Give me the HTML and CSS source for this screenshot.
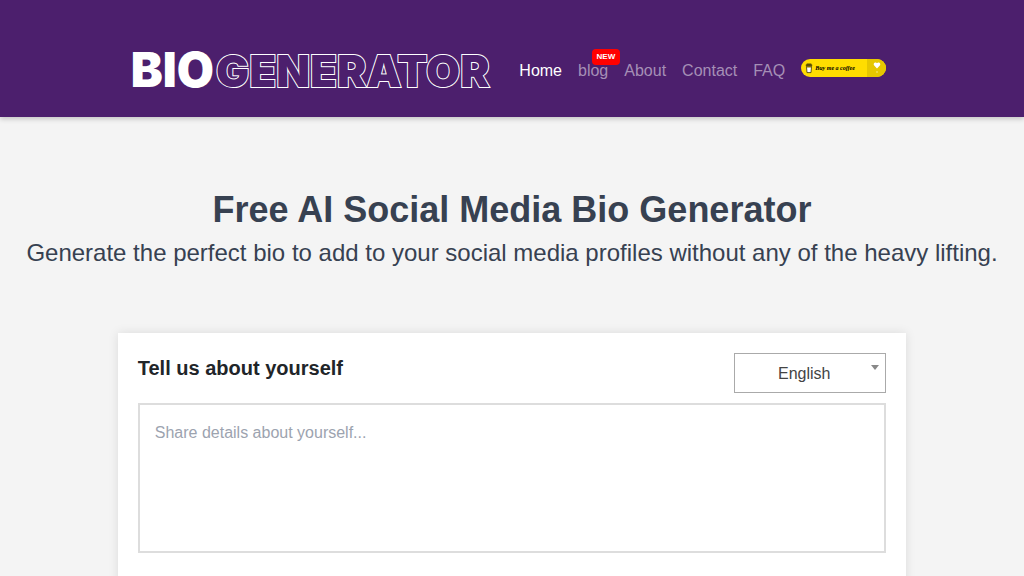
FILE: index.html
```
<!DOCTYPE html>
<html lang="en">

<head>
	<title>Free AI Social Media Bio Generator</title>
	<meta charset="utf-8" />
	<meta name="viewport" content="width=device-width, initial-scale=1">
	<link rel="stylesheet" href="styles.css">
</head>

<body>
	<header class="header">
		<nav class="navbar">
			<a class="logo" href="/"><span class="logo-solid">BIO</span><span class="logo-outline">GENERATOR</span></a>
			<ul class="menu">
				<li><a class="active" href="/">Home</a></li>
				<li><a class="has-badge" href="/blog">blog<span class="badge">NEW</span></a></li>
				<li><a href="/about">About</a></li>
				<li><a href="/contact">Contact</a></li>
				<li><a href="/faq">FAQ</a></li>
			</ul>
			<a class="coffee" href="/coffee">
				<svg class="cup" viewBox="0 0 8 12" width="8" height="12">
					<path d="M1.4 3.5h5.2L6 10.6H2z" fill="#fff" stroke="#3c3500" stroke-width=".8" />
					<path d="M1.8 1.4h4.4l.5 1.4H1.3zM.8 2.6h6.4v1.2H.8z" fill="#5a4e00" />
					<path d="M1.5 4h5l-.3 1.4H1.8z" fill="#8a7500" />
				</svg>
				<span class="coffee-text">Buy me a coffee</span>
				<span class="coffee-end">
					<svg viewBox="0 0 10 14" width="10" height="14">
						<path d="M5 7.4L2.2 4.6C.8 3 2.6.6 4.4 1.8L5 2.3l.6-.5C7.4.6 9.2 3 7.8 4.6z" fill="#fff" />
						<circle cx="5" cy="11" r=".7" fill="#fff6b0" />
					</svg>
				</span>
			</a>
		</nav>
	</header>

	<main>
		<div class="intro">
			<h1>Free AI Social Media Bio Generator</h1>
			<p>Generate the perfect bio to add to your social media profiles without any of the heavy lifting.</p>
		</div>

		<form class="card">
			<div class="card-top">
				<label class="card-title" for="about">Tell us about yourself</label>
				<div class="select">
					<select id="language" name="language" aria-label="Language">
						<option>English</option>
						<option>Spanish</option>
						<option>French</option>
						<option>German</option>
					</select>
				</div>
			</div>
			<textarea id="about" name="about" placeholder="Share details about yourself..."></textarea>
		</form>
	</main>
</body>

</html>
```
FILE: styles.css
```
* {
	box-sizing: border-box;
}

body {
	margin: 0;
	background-color: #f4f4f4;
	color: #212529;
	font-family: "Liberation Sans", Arial, sans-serif;
	font-size: 16px;
	line-height: 24px;
}

/* Header */
.header {
	background-color: #4c1f6d;
	padding: 40px 0 16px;
	box-shadow: 0 2px 5px rgba(0, 0, 0, .2);
}

.navbar {
	display: flex;
	align-items: center;
	width: 77%;
	min-height: 61px;
	margin: 0 auto;
	padding: 0 20px 0 13px;
}

.logo {
	display: flex;
	align-items: baseline;
	color: #fff;
	font-family: Inter, sans-serif;
	line-height: 58px;
	text-decoration: none;
}

.logo-solid {
	font-size: 48px;
	font-weight: 900;
}

/* the stroke sits behind the fill, so only the outer edge shows */
.logo-outline {
	margin-left: 2px;
	color: #4c1f6d;
	font-size: 44px;
	font-weight: 900;
	-webkit-text-stroke: 2px #fff;
	paint-order: stroke fill;
}

.menu {
	display: flex;
	gap: 16px;
	list-style: none;
	margin: 0 16px 0 auto;
	padding: 0;
}

.menu a {
	color: #a58fb6;
	text-decoration: none;
}

.menu a:hover,
.menu a.active {
	color: #fff;
}

.has-badge {
	position: relative;
}

.badge {
	position: absolute;
	top: -13px;
	right: -12px;
	padding: 0 5px;
	border-radius: 4px;
	background-color: red;
	color: #fff;
	font-size: 8px;
	font-weight: bold;
	line-height: 16px;
}

.coffee {
	display: flex;
	align-items: center;
	flex: none;
	width: 85px;
	height: 18px;
	margin-top: -6px;
	padding-left: 4px;
	border-radius: 9px;
	overflow: hidden;
	background-color: #fd0;
	color: #000;
	text-decoration: none;
}

.coffee-text {
	margin-left: 2px;
	font-family: "Liberation Serif", serif;
	font-size: 6px;
	font-style: italic;
	font-weight: bold;
	line-height: 18px;
	white-space: nowrap;
}

.coffee-end {
	display: flex;
	align-items: center;
	justify-content: center;
	width: 19px;
	height: 18px;
	margin-left: auto;
	background-color: #e6c700;
}

/* Heading */
.intro {
	padding: 73px 16px 64px;
	color: #374151;
	text-align: center;
}

.intro h1 {
	margin: 0;
	font-size: 36px;
	line-height: 40px;
}

.intro p {
	margin: 7px 0 0;
	font-size: 24px;
	line-height: 32px;
}

/* Form */
.card {
	width: 77%;
	margin: 0 auto;
	padding: 20px 20px 40px;
	background-color: #fff;
	box-shadow: 0 0 10px rgba(0, 0, 0, .1);
}

.card-top {
	display: flex;
	justify-content: space-between;
	margin-bottom: 10px;
}

.card-title {
	font-size: 20px;
	font-weight: bold;
	line-height: 30px;
}

.select {
	position: relative;
	width: 152px;
}

.select select {
	display: block;
	width: 100%;
	height: 40px;
	padding: 1px 12px 0 0;
	border: 1px solid #aaa;
	border-radius: 0;
	background-color: #fff;
	color: #444;
	font: inherit;
	text-align: center;
	text-align-last: center;
	-webkit-appearance: none;
	appearance: none;
}

/* drop-down arrow */
.select:after {
	content: "";
	position: absolute;
	top: 12px;
	right: 7px;
	border: 4px solid transparent;
	border-top: 5px solid #888;
	border-bottom: 0;
	pointer-events: none;
}

textarea {
	display: block;
	width: 100%;
	height: 150px;
	padding: 16px 15px;
	border: 2px solid #ddd;
	border-radius: 0;
	font: inherit;
	resize: none;
}

textarea::placeholder {
	color: #9ca3af;
}
```
